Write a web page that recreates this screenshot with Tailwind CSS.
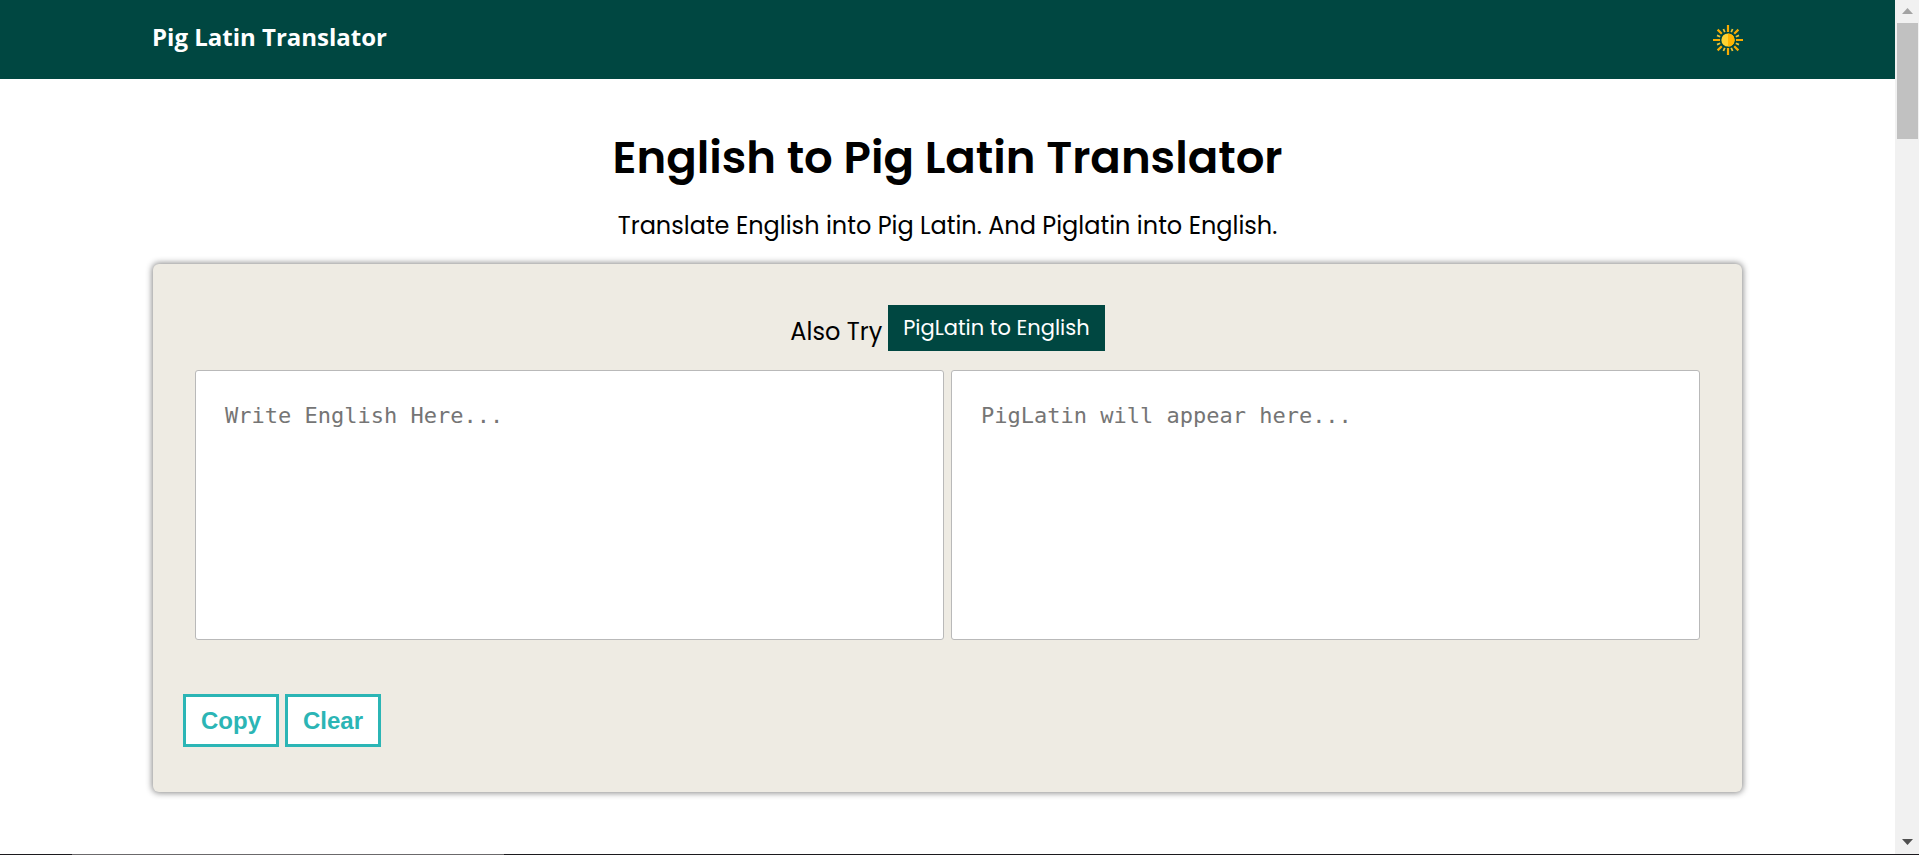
<!DOCTYPE html>
<html lang="en">
<head>
  <meta charset="UTF-8">
  <meta name="viewport" content="width=device-width, initial-scale=1.0">
  <title>Pig Latin Translator</title>
  <script src="https://cdn.jsdelivr.net/npm/@tailwindcss/browser@4"></script>
</head>

<body class="flex flex-col h-screen overflow-hidden bg-white text-black font-['Poppins','Inter',sans-serif]">
  <div class="flex flex-1 min-h-0">
    <div class="flex-1 min-w-0">
      <!-- Navbar -->
      <header class="bg-[#004741]">
        <nav class="mx-[152px] h-[79px] flex items-center justify-between">
          <a href="#" class="pb-[6px] text-white text-2xl font-bold font-['Open_Sans',sans-serif]">Pig Latin Translator</a>
          <button type="button" aria-label="Toggle theme">
            <svg class="size-[30px]" viewBox="0 0 30 30" fill="none">
              <g stroke="#f9ab00" stroke-width="2.2">
                <path d="M15 0v7M15 23v7M0 15h7M23 15h7"/>
                <path d="M4.6 4.6l4.2 4.2M21.2 21.2l4.2 4.2M25.4 4.6l-4.2 4.2M8.8 21.2l-4.2 4.2"/>
              </g>
              <path stroke="#e8c33a" stroke-width="1.8" d="M10.4 4l1.4 3.2M18.2 22.8l1.4 3.2M19.6 4l-1.4 3.2M11.8 22.8L10.4 26M4 10.4l3.2 1.4M22.8 18.2l3.2 1.4M4 19.6l3.2-1.4M22.8 11.8l3.2-1.4"/>
              <circle cx="15" cy="15" r="6.6" fill="#fdd231"/>
              <path d="M15 8.4a6.6 6.6 0 0 1 0 13.2z" fill="#ffb300"/>
            </svg>
          </button>
        </nav>
      </header>

      <!-- Main Content -->
      <main class="mx-[153px] pt-[49px] text-center">
        <h1 class="text-[45px] leading-[60px] font-semibold">English to Pig Latin Translator</h1>
        <p class="mt-5 text-2xl leading-9">Translate English into Pig Latin. And Piglatin into English.</p>

        <section class="mt-5 px-[30px] pt-[41px] pb-[45px] bg-[#eeebe3] rounded-md shadow-[0_0_6px_1px_#888]">
          <div class="flex justify-center items-center gap-[6px]">
            <span class="pt-2 text-2xl">Also Try</span>
            <a href="#" class="px-[15px] h-[46px] leading-[46px] bg-[#004741] text-white text-[21px]">PigLatin to English</a>
          </div>

          <div class="mt-[19px] px-3 flex gap-[7px]">
            <textarea aria-label="English text" placeholder="Write English Here..." class="flex-1 min-w-0 h-[270px] px-[29px] py-8 resize-none bg-white border border-[#b9b9b9] rounded-[3px] text-[22px] leading-[26px] font-['Consolas','DejaVu_Sans_Mono',monospace] placeholder:text-[#757575]"></textarea>
            <textarea aria-label="Pig Latin text" placeholder="PigLatin will appear here..." class="flex-1 min-w-0 h-[270px] px-[29px] py-8 resize-none bg-white border border-[#b9b9b9] rounded-[3px] text-[22px] leading-[26px] font-['Consolas','DejaVu_Sans_Mono',monospace] placeholder:text-[#757575]"></textarea>
          </div>

          <div class="mt-[54px] flex gap-[6px] font-['Liberation_Sans',sans-serif]">
            <button type="button" class="px-[15px] py-[10px] bg-white border-3 border-[#2bb5b5] text-[#2bb5b5] text-2xl leading-[27px] font-bold">Copy</button>
            <button type="button" class="px-[15px] py-[10px] bg-white border-3 border-[#2bb5b5] text-[#2bb5b5] text-2xl leading-[27px] font-bold">Clear</button>
          </div>
        </section>
      </main>
    </div>

    <!-- Scrollbar -->
    <div class="w-6 flex flex-col items-center bg-[#f1f1f1]">
      <svg class="w-[11px] h-[23px]" viewBox="0 0 11 23"><path d="M0 14L5.5 8L11 14z" fill="#a3a3a3"/></svg>
      <div class="w-[21px] h-[116px] bg-[#c1c1c1]"></div>
      <svg class="w-[11px] h-[23px] mt-auto" viewBox="0 0 11 23"><path d="M0 8L5.5 14L11 8z" fill="#505050"/></svg>
    </div>
  </div>

  <!-- Bottom edge -->
  <div class="flex h-px bg-[#1c1a1e]">
    <div class="w-[72px]"></div>
    <div class="w-[432px] bg-[#6b696b]"></div>
  </div>
</body>
</html>
